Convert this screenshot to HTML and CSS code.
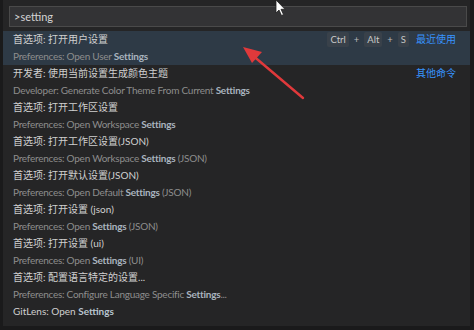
FILE: index.html
```html
<!DOCTYPE html>
<html>
<head>
<meta charset="utf-8">
<link rel="stylesheet" href="styles.css">
</head>
<body>
<div class="panel">
  <div class="input">&gt;setting</div>
  <div class="list">
    <div class="row selected">
      <div class="line"><span class="label">首选项: 打开用户设置</span><span class="keys"><span class="key">Ctrl</span><span class="plus">+</span><span class="key">Alt</span><span class="plus">+</span><span class="key">S</span></span><span class="group">最近使用</span></div>
      <div class="desc">Preferences: Open User <b>Settings</b></div>
    </div>
    <div class="row">
      <div class="line"><span class="label">开发者: 使用当前设置生成颜色主题</span><span class="group">其他命令</span></div>
      <div class="desc">Developer: Generate Color Theme From Current <b>Settings</b></div>
    </div>
    <div class="row">
      <div class="line"><span class="label">首选项: 打开工作区设置</span></div>
      <div class="desc">Preferences: Open Workspace <b>Settings</b></div>
    </div>
    <div class="row">
      <div class="line"><span class="label">首选项: 打开工作区设置(JSON)</span></div>
      <div class="desc">Preferences: Open Workspace <b>Settings</b> (JSON)</div>
    </div>
    <div class="row">
      <div class="line"><span class="label">首选项: 打开默认设置(JSON)</span></div>
      <div class="desc">Preferences: Open Default <b>Settings</b> (JSON)</div>
    </div>
    <div class="row">
      <div class="line"><span class="label">首选项: 打开设置 (json)</span></div>
      <div class="desc">Preferences: Open <b>Settings</b> (JSON)</div>
    </div>
    <div class="row">
      <div class="line"><span class="label">首选项: 打开设置 (ui)</span></div>
      <div class="desc">Preferences: Open <b>Settings</b> (UI)</div>
    </div>
    <div class="row">
      <div class="line"><span class="label">首选项: 配置语言特定的设置...</span></div>
      <div class="desc">Preferences: Configure Language Specific <b>Settings</b>...</div>
    </div>
    <div class="row single">
      <div class="line"><span class="label">GitLens: Open <b>Settings</b></span></div>
    </div>
  </div>
  <svg class="arrow" width="80" height="70" viewBox="0 0 80 70">
    <line x1="62" y1="52" x2="10" y2="8" stroke="#e0393b" stroke-width="2.4" stroke-linecap="round"/>
    <polygon points="2,1 21,6 11,17" fill="#e0393b"/>
  </svg>
  <svg class="cursor" width="14" height="18" viewBox="0 0 14 18">
    <path d="M1 0 L1 13 L4 10 L6.5 15.5 L8.5 14.6 L6 9.3 L10 9.3 Z" fill="#ffffff" stroke="#222" stroke-width="0.8"/>
  </svg>
</div>
</body>
</html>
```
FILE: styles.css
```css
html, body {
  margin: 0;
  padding: 0;
  background: #1a1a1b;
  width: 474px;
  height: 330px;
  overflow: hidden;
}
.panel {
  position: relative;
  margin-left: 3px;
  width: 467px;
  height: 326px;
  background: #252526;
  font-family: Lato, "Noto Sans CJK SC", sans-serif;
  font-size: 10px;
  letter-spacing: -0.25px;
  color: #cccccc;
  box-sizing: border-box;
  padding-top: 6px;
}
.input {
  margin: 0 3px 0 6px;
  height: 21px;
  box-sizing: border-box;
  border: 1px solid #4a4a4a;
  background: #333335;
  padding-left: 4px;
  line-height: 19px;
  font-size: 11px;
  letter-spacing: 0;
  color: #d4d4d4;
}
.list {
  margin-top: 4px;
}
.row {
  height: 34px;
  padding: 0 14px 0 10px;
}
.row.single {
  height: 17px;
}
.row.selected {
  background: #2e3a46;
}
.line {
  display: flex;
  align-items: center;
  height: 17px;
  line-height: 17px;
}
.label {
  flex: 1;
  white-space: nowrap;
  font-size: 10px;
  letter-spacing: 0;
  color: #d0d0d0;
}
.desc {
  height: 17px;
  line-height: 17px;
  color: #8d8d8d;
  white-space: nowrap;
}
b {
  font-weight: 700;
  color: #a9b4bf;
}
.label b {
  color: #b8c4cf;
}
.keys {
  display: flex;
  align-items: center;
  gap: 2px;
  margin-right: 7px;
  font-size: 9.5px;
  letter-spacing: 0;
}
.key {
  background: #39414a;
  color: #c8c8c8;
  padding: 0 3px;
  height: 15px;
  line-height: 15px;
  border-radius: 2px;
}
.plus {
  color: #b8b8b8;
  padding: 0 3px;
}
.group {
  color: #3794ff;
  letter-spacing: 0;
}
.arrow {
  position: absolute;
  left: 238px;
  top: 46px;
}
.cursor {
  position: absolute;
  left: 272px;
  top: 0;
}
```
